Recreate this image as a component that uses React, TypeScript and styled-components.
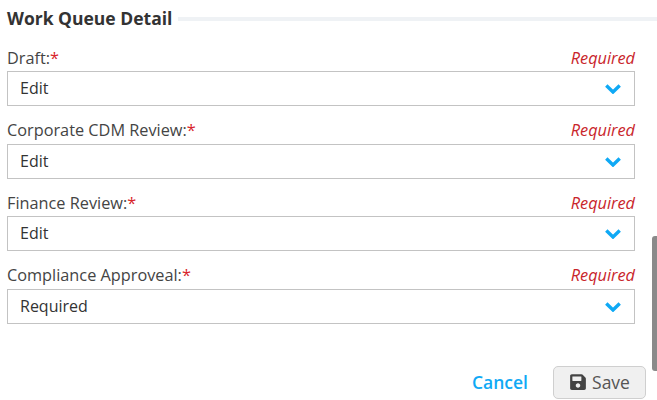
import styled, { createGlobalStyle } from "styled-components";
import { FaSave } from "react-icons/fa";

const GlobalStyle = createGlobalStyle`
  html, body {
    margin: 0;
    padding: 0;
    height: 100%;
    overflow: hidden;
    background: #fff;
    font-family: "Open Sans", "Liberation Sans", sans-serif;
  }
`;

const Page = styled.div`
  position: relative;
  width: 657px;
  height: 400px;
  padding: 7px 22px 0 7px;
  box-sizing: border-box;
  overflow: hidden;
`;

const Heading = styled.div`
  display: flex;
  align-items: center;
  gap: 6px;
  height: 22px;
  margin-right: -22px;
  margin-bottom: 15px;
`;

const HeadingText = styled.h3`
  margin: 0;
  font-size: 17.5px;
  line-height: 22px;
  font-weight: 700;
  color: #333;
  white-space: nowrap;
`;

const HeadingRule = styled.div`
  flex: 1;
  height: 4px;
  margin-top: 1px;
  background: #eff2f5;
`;

const Fields = styled.div`
  display: flex;
  flex-direction: column;
  gap: 10.67px;
`;

const Field = styled.div`
  display: flex;
  flex-direction: column;
`;

const LabelRow = styled.div`
  display: flex;
  justify-content: space-between;
  align-items: center;
  height: 27px;
`;

const Label = styled.label`
  font-size: 16.3px;
  color: #444;
`;

const Star = styled.span`
  color: #d8232a;
`;

const Hint = styled.span`
  font-size: 16.3px;
  font-style: italic;
  color: #c9252b;
`;

const Select = styled.div`
  display: flex;
  align-items: center;
  justify-content: space-between;
  height: 35px;
  padding: 0 13px 1px 12px;
  box-sizing: border-box;
  border: 1px solid #c3c3c3;
  background: #fff;
  font-size: 16px;
  color: #333;
`;

const ChevronSvg = styled.svg`
  width: 16px;
  height: 10px;
  margin-top: 2px;
  fill: none;
  stroke: #0fa9f5;
  stroke-width: 3.4;
`;

const Footer = styled.div`
  display: flex;
  justify-content: flex-end;
  align-items: center;
  gap: 25px;
  margin-top: 42px;
  margin-right: -11px;
`;

const CancelLink = styled.a`
  font-size: 17.5px;
  font-weight: 600;
  color: #0fa9f5;
  cursor: pointer;
`;

const SaveButton = styled.button`
  display: flex;
  align-items: center;
  justify-content: center;
  gap: 5px;
  width: 93px;
  height: 33px;
  padding: 0;
  border: 1px solid #cfcfcf;
  border-radius: 5px;
  background: #f0f0f0;
  font-family: inherit;
  font-size: 17.5px;
  color: #555;
`;

const SaveIcon = styled(FaSave)`
  width: 18px;
  height: 18px;
  color: #444;
`;

const ScrollThumb = styled.div`
  position: absolute;
  top: 236px;
  right: 0;
  width: 5px;
  height: 135px;
  border-radius: 3px 0 0 3px;
  background: #8a8a8a;
`;

const fields = [
  { label: "Draft:", value: "Edit" },
  { label: "Corporate CDM Review:", value: "Edit" },
  { label: "Finance Review:", value: "Edit" },
  { label: "Compliance Approveal:", value: "Required" },
];

export default function App() {
  return (
    <Page>
      <GlobalStyle />
      <Heading>
        <HeadingText>Work Queue Detail</HeadingText>
        <HeadingRule />
      </Heading>
      <Fields>
        {fields.map((field) => (
          <Field key={field.label}>
            <LabelRow>
              <Label>
                {field.label}
                <Star>*</Star>
              </Label>
              <Hint>Required</Hint>
            </LabelRow>
            <Select>
              {field.value}
              <ChevronSvg viewBox="0 0 16 10">
                <path d="M1.3 1.5 L8 8 L14.7 1.5" />
              </ChevronSvg>
            </Select>
          </Field>
        ))}
      </Fields>
      <Footer>
        <CancelLink>Cancel</CancelLink>
        <SaveButton>
          <SaveIcon />
          Save
        </SaveButton>
      </Footer>
      <ScrollThumb />
    </Page>
  );
}
